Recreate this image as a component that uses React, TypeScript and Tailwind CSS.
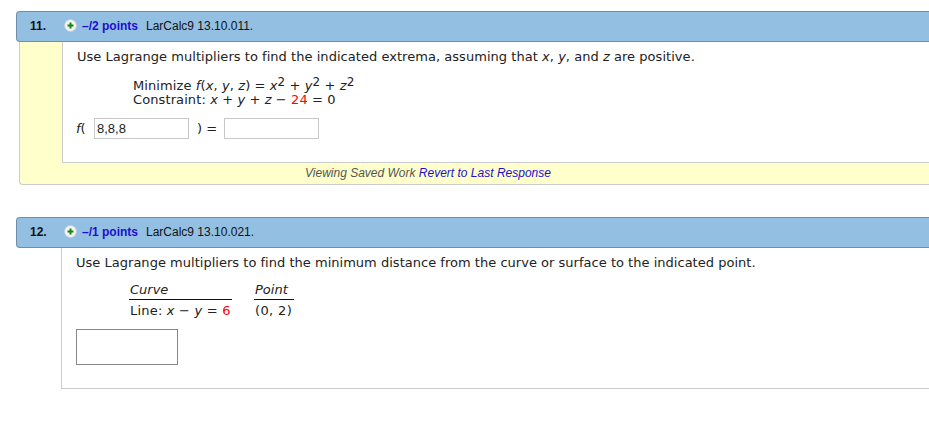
const verdana = "font-['DejaVu_Sans',sans-serif] text-[13px] text-[#222]";

function PlusIcon() {
  return (
    <span className="w-[13px] h-[13px] rounded-full bg-[#f4f4f4] border border-[#c4ccd4] flex items-center justify-center shrink-0">
      <svg width="7" height="7" viewBox="0 0 7 7">
        <path d="M3.5 0.5v6M0.5 3.5h6" stroke="#108a10" strokeWidth="2" />
      </svg>
    </span>
  );
}

function Header({ num, pts, code }: { num: string; pts: string; code: string }) {
  return (
    <div className="h-[31px] ml-4 rounded-l-[4px] bg-[#93c0e2] border-y border-l border-[#6f8ea8] flex items-center pb-[2px] font-['Liberation_Sans',sans-serif] text-[12px] text-[#111]">
      <span className="font-bold pl-[13px] w-[47px]">{num}</span>
      <PlusIcon />
      <span className="ml-[5px] font-bold text-[#1c0fd0]">{pts}</span>
      <span className="ml-[8px]">{code}</span>
    </div>
  );
}

function Field({ w, value }: { w: string; value?: string }) {
  return (
    <div className={`${w} h-[21px] border border-[#c8c8c8] bg-white flex items-center pl-[2px] font-['Liberation_Sans',sans-serif] text-[13px] text-[#222]`}>
      {value}
    </div>
  );
}

export default function App() {
  return (
    <div className="w-[929px] h-[441px] bg-white overflow-hidden pt-[11px]">
      <Header num="11." pts="–/2 points" code="LarCalc9 13.10.011." />

      <div className="ml-[19px] rounded-bl-[4px] bg-[#ffffcc] border-l border-b border-[#cccccc]">
        <div className="ml-[42px] h-[121px] bg-white border-l border-b border-[#cccccc] pl-[14px] pt-[7px]">
          <p className={`${verdana} leading-[16px] tracking-[0.04px]`}>
            Use Lagrange multipliers to find the indicated extrema, assuming that <i>x</i>, <i>y</i>, and <i>z</i> are positive.
          </p>
          <div className={`${verdana} ml-[56px] mt-[14px] leading-[14px] tracking-[0.1px]`}>
            <p>
              Minimize <i>f</i>(<i>x</i>, <i>y</i>, <i>z</i>) = <i>x</i>
              <sup className="text-[12px] top-[-4px]">2</sup> + <i>y</i>
              <sup className="text-[12px] top-[-4px]">2</sup> + <i>z</i>
              <sup className="text-[12px] top-[-4px]">2</sup>
            </p>
            <p>
              Constraint: <i>x</i> + <i>y</i> + <i>z</i> − <span className="text-[#ff0000]">24</span> = 0
            </p>
          </div>
          <div className={`${verdana} flex items-center mt-[11px]`}>
            <span className="w-[17px] -ml-[1px] mr-[1px] whitespace-nowrap"><i>f</i>(</span>
            <Field w="w-[95px]" value="8,8,8" />
            <span className="ml-[8px] w-[27px]">) =</span>
            <Field w="w-[95px]" />
          </div>
        </div>
        <div className="h-[21px] ml-[285px] flex items-center pb-[2px] font-['Liberation_Sans',sans-serif] text-[12px] italic text-[#555]">
          Viewing Saved Work&nbsp;<span className="text-[#1c0fd0]">Revert to Last Response</span>
        </div>
      </div>

      <div className="mt-[32px]">
        <Header num="12." pts="–/1 points" code="LarCalc9 13.10.021." />
        <div className="ml-[61px] h-[141px] border-l border-b border-[#cccccc] pl-[14px] pt-[7px]">
          <p className={`${verdana} leading-[16px] tracking-[0.02px]`}>
            Use Lagrange multipliers to find the minimum distance from the curve or surface to the indicated point.
          </p>
          <div className={`${verdana} ml-[53px] mt-[11px] flex gap-[22px] leading-[16px]`}>
            <div className="w-[103px]">
              <div className="border-b border-[#111] pl-[1px] pb-[1px] italic">Curve</div>
              <div className="pl-[1px] pt-[3px] tracking-[0.2px]">
                Line: <i>x</i> − <i>y</i> = <span className="text-[#ff0000]">6</span>
              </div>
            </div>
            <div className="w-[40px]">
              <div className="border-b border-[#111] pl-[1px] pb-[1px] italic">Point</div>
              <div className="pl-[1px] pt-[3px] tracking-[0.35px]">(0, 2)</div>
            </div>
          </div>
          <div className="w-[102px] h-[36px] mt-[10px] border border-[#888888] bg-white" />
        </div>
      </div>
    </div>
  );
}
